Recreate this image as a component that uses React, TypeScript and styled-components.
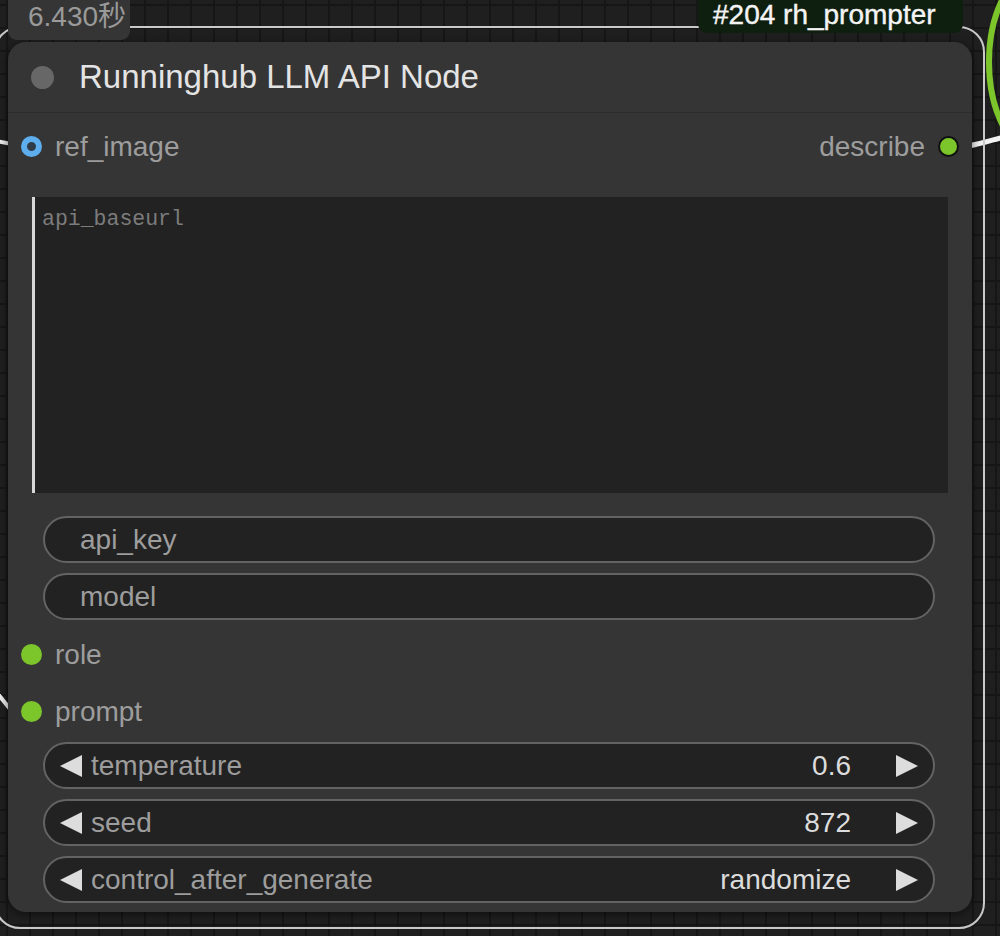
import React from "react";
import styled, { createGlobalStyle } from "styled-components";

const GlobalStyle = createGlobalStyle`
  html, body { margin: 0; padding: 0; background: #1d1d1d; }
  body {
    width: 1000px;
    height: 936px;
    overflow: hidden;
    font-family: "Liberation Sans", Arial, sans-serif;
  }
`;

const Canvas = styled.div`
  position: relative;
  width: 1000px;
  height: 936px;
  overflow: hidden;
  background-color: #1f1f1f;
  background-image: linear-gradient(#161616 2px, transparent 2px),
    linear-gradient(90deg, #161616 2px, transparent 2px);
  background-size: 23px 23px;
  background-position: 6px 4px;
`;

const Wires = styled.svg`
  position: absolute;
  left: 0;
  top: 0;
  width: 1000px;
  height: 936px;
  pointer-events: none;
`;

const SelectionOutline = styled.div`
  position: absolute;
  left: -6px;
  top: 26px;
  width: 987px;
  height: 899px;
  border: 2.5px solid #c9c9c9;
  border-radius: 26px;
`;

const TimeBadge = styled.div`
  position: absolute;
  left: 8px;
  top: 0;
  width: 122px;
  height: 40px;
  box-sizing: border-box;
  padding-left: 20px;
  background: #353535;
  border-radius: 0 0 9px 9px;
  color: #9a9a9a;
  font-size: 28px;
  line-height: 34px;
  font-family: "Liberation Sans", Arial, "Noto Sans CJK SC", sans-serif;
  white-space: nowrap;
`;

const IdBadge = styled.div`
  position: absolute;
  left: 698px;
  top: 0;
  width: 265px;
  height: 33px;
  box-sizing: border-box;
  padding-left: 15px;
  background: #0e1e0f;
  border-radius: 0 0 9px 9px;
  color: #f4f4f4;
  font-size: 28px;
  line-height: 30px;
  white-space: nowrap;
  -webkit-text-stroke: 0.4px #f4f4f4;
`;

const Node = styled.div`
  position: absolute;
  left: 8px;
  top: 42px;
  width: 964px;
  height: 870px;
  background: #353535;
  border-radius: 18px;
  box-shadow: 0 2px 10px rgba(0, 0, 0, 0.55);
  display: flex;
  flex-direction: column;
`;

const Header = styled.div`
  height: 70px;
  border-bottom: 1px solid #2c2c2c;
  display: flex;
  align-items: center;
  gap: 25px;
  padding-left: 23px;
`;

const TitleDot = styled.span`
  width: 23px;
  height: 23px;
  border-radius: 50%;
  background: #676767;
  flex: none;
`;

const Title = styled.span`
  color: #e4e4e4;
  font-size: 33px;
  white-space: nowrap;
`;

const Body = styled.div`
  display: flex;
  flex-direction: column;
  padding: 5px 0 8px;
`;

const SlotRow = styled.div<{ $mt?: number }>`
  height: 57px;
  margin-top: ${(p) => p.$mt ?? 0}px;
  padding: 0 13px;
  display: flex;
  align-items: center;
  justify-content: space-between;
`;

const SlotSide = styled.div`
  display: flex;
  align-items: center;
  gap: 13px;
`;

const SlotLabel = styled.span`
  color: #9d9d9d;
  font-size: 28px;
  white-space: nowrap;
`;

const Dot = styled.span<{ $kind: "image" | "string" | "output" }>`
  width: 21px;
  height: 21px;
  border-radius: 50%;
  box-sizing: border-box;
  flex: none;
  background: ${(p) => (p.$kind === "image" ? "#2f3b46" : "#7cc52b")};
  border: ${(p) =>
    p.$kind === "image"
      ? "6px solid #5eaeee"
      : p.$kind === "output"
      ? "2px solid #111"
      : "none"};
`;

const TextArea = styled.div`
  margin: 22px 24px 0;
  height: 296px;
  background: #222222;
  border-left: 3px solid #d8d8d8;
  box-sizing: border-box;
  padding: 8px 0 0 7px;
  color: #7c7c7c;
  font-family: "Liberation Mono", "Courier New", monospace;
  font-size: 21.5px;
  line-height: 28px;
`;

const Widget = styled.div<{ $mt: number }>`
  margin: ${(p) => p.$mt}px 37px 0 35px;
  height: 47px;
  box-sizing: border-box;
  border: 2px solid #636363;
  border-radius: 24px;
  background: #222222;
  display: flex;
  align-items: center;
  font-size: 28px;
  white-space: nowrap;
`;

const TextWidgetLabel = styled.span`
  color: #9d9d9d;
  padding-left: 35px;
`;

const NumberInner = styled.div`
  flex: 1;
  display: flex;
  align-items: center;
  padding: 0 15px;
`;

const Arrow = styled.svg`
  width: 22px;
  height: 22px;
  flex: none;
`;

const WidgetName = styled.span`
  color: #9d9d9d;
  margin-left: 9px;
  flex: 1;
`;

const WidgetValue = styled.span`
  color: #dcdcdc;
  margin-right: 45px;
`;

function LeftArrow() {
  return (
    <Arrow viewBox="0 0 22 22">
      <polygon points="0,11 22,0 22,22" fill="#dddddd" />
    </Arrow>
  );
}

function RightArrow() {
  return (
    <Arrow viewBox="0 0 22 22">
      <polygon points="22,11 0,0 0,22" fill="#dddddd" />
    </Arrow>
  );
}

function NumberWidget({ name, value, mt }: { name: string; value: string; mt: number }) {
  return (
    <Widget $mt={mt}>
      <NumberInner>
        <LeftArrow />
        <WidgetName>{name}</WidgetName>
        <WidgetValue>{value}</WidgetValue>
        <RightArrow />
      </NumberInner>
    </Widget>
  );
}

export default function App() {
  return (
    <>
      <GlobalStyle />
      <Canvas>
        <Wires viewBox="0 0 1000 936">
          <path d="M -4 141 L 22 146" stroke="#eeeeee" strokeWidth="4" fill="none" />
          <path d="M -2 694 L 14 714" stroke="#eeeeee" strokeWidth="4" fill="none" />
          <path d="M 955 147 C 972 147, 985 142, 1004 137" stroke="#f2f2f2" strokeWidth="5" fill="none" />
          <ellipse cx="1050" cy="62" rx="61" ry="100" stroke="#7cc52b" strokeWidth="6" fill="none" />
        </Wires>
        <SelectionOutline />
        <Node>
          <Header>
            <TitleDot />
            <Title>Runninghub LLM API Node</Title>
          </Header>
          <Body>
            <SlotRow>
              <SlotSide>
                <Dot $kind="image" />
                <SlotLabel>ref_image</SlotLabel>
              </SlotSide>
              <SlotSide>
                <SlotLabel>describe</SlotLabel>
                <Dot $kind="output" />
              </SlotSide>
            </SlotRow>
            <TextArea>api_baseurl</TextArea>
            <Widget $mt={23}>
              <TextWidgetLabel>api_key</TextWidgetLabel>
            </Widget>
            <Widget $mt={10}>
              <TextWidgetLabel>model</TextWidgetLabel>
            </Widget>
            <SlotRow $mt={6}>
              <SlotSide>
                <Dot $kind="string" />
                <SlotLabel>role</SlotLabel>
              </SlotSide>
            </SlotRow>
            <SlotRow>
              <SlotSide>
                <Dot $kind="string" />
                <SlotLabel>prompt</SlotLabel>
              </SlotSide>
            </SlotRow>
            <NumberWidget name="temperature" value="0.6" mt={2} />
            <NumberWidget name="seed" value="872" mt={10} />
            <NumberWidget name="control_after_generate" value="randomize" mt={10} />
          </Body>
        </Node>
        <TimeBadge>6.430秒</TimeBadge>
        <IdBadge>#204 rh_prompter</IdBadge>
      </Canvas>
    </>
  );
}
